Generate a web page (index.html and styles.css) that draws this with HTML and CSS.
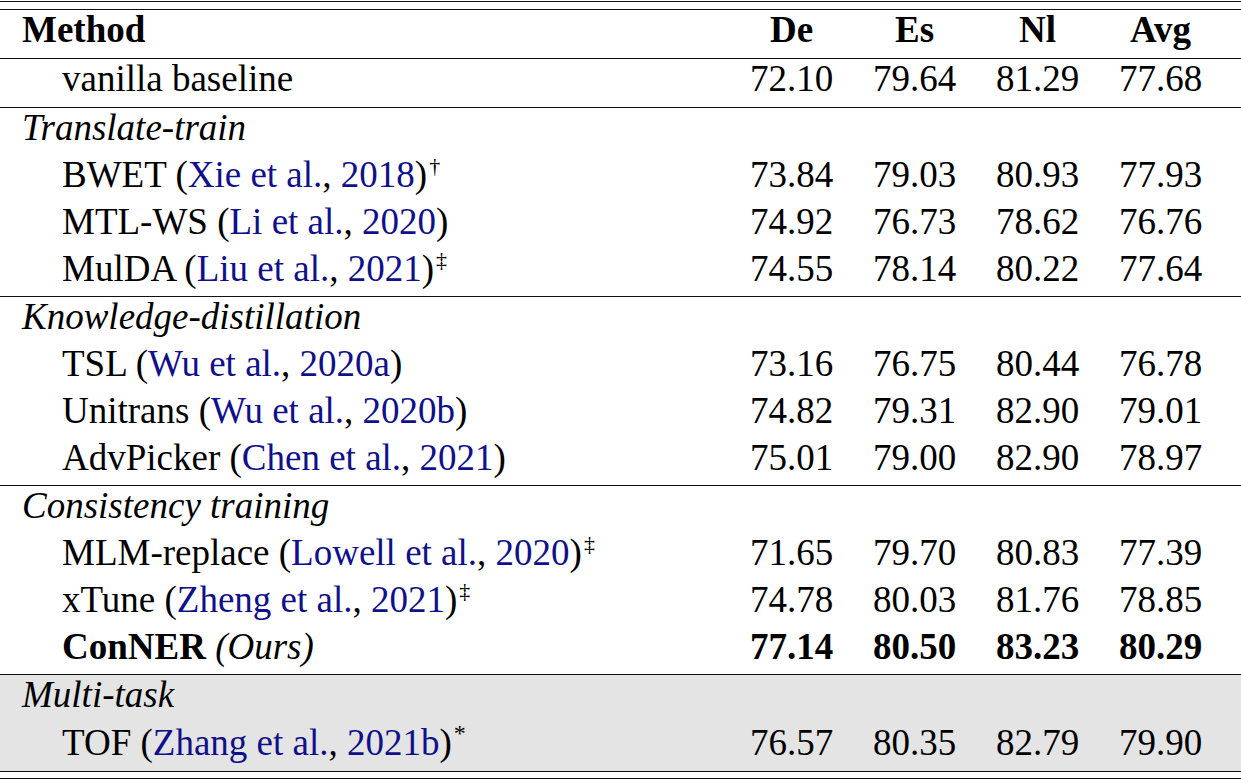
FILE: index.html
```html
<!DOCTYPE html>
<html lang="en">
<head>
<meta charset="utf-8">
<title>Results table</title>
<link rel="stylesheet" href="styles.css">
</head>
<body>
<div class="table">
  <div class="section head">
    <div class="row tall">
      <div class="cell method">Method</div>
      <div class="cell num">De</div>
      <div class="cell num">Es</div>
      <div class="cell num">Nl</div>
      <div class="cell num">Avg</div>
    </div>
  </div>
  <div class="section">
    <div class="row tall">
      <div class="cell method sub">vanilla baseline</div>
      <div class="cell num">72.10</div>
      <div class="cell num">79.64</div>
      <div class="cell num">81.29</div>
      <div class="cell num">77.68</div>
    </div>
  </div>
  <div class="section">
    <div class="row">
      <div class="cell method cat">Translate-train</div>
    </div>
    <div class="row">
      <div class="cell method sub">BWET (<a class="cite">Xie et al.</a>, <a class="cite">2018</a>)<sup class="mark">†</sup></div>
      <div class="cell num">73.84</div>
      <div class="cell num">79.03</div>
      <div class="cell num">80.93</div>
      <div class="cell num">77.93</div>
    </div>
    <div class="row">
      <div class="cell method sub">MTL-WS (<a class="cite">Li et al.</a>, <a class="cite">2020</a>)</div>
      <div class="cell num">74.92</div>
      <div class="cell num">76.73</div>
      <div class="cell num">78.62</div>
      <div class="cell num">76.76</div>
    </div>
    <div class="row">
      <div class="cell method sub">MulDA (<a class="cite">Liu et al.</a>, <a class="cite">2021</a>)<sup class="mark">‡</sup></div>
      <div class="cell num">74.55</div>
      <div class="cell num">78.14</div>
      <div class="cell num">80.22</div>
      <div class="cell num">77.64</div>
    </div>
  </div>
  <div class="section">
    <div class="row">
      <div class="cell method cat">Knowledge-distillation</div>
    </div>
    <div class="row">
      <div class="cell method sub">TSL (<a class="cite">Wu et al.</a>, <a class="cite">2020a</a>)</div>
      <div class="cell num">73.16</div>
      <div class="cell num">76.75</div>
      <div class="cell num">80.44</div>
      <div class="cell num">76.78</div>
    </div>
    <div class="row">
      <div class="cell method sub">Unitrans (<a class="cite">Wu et al.</a>, <a class="cite">2020b</a>)</div>
      <div class="cell num">74.82</div>
      <div class="cell num">79.31</div>
      <div class="cell num">82.90</div>
      <div class="cell num">79.01</div>
    </div>
    <div class="row">
      <div class="cell method sub">AdvPicker (<a class="cite">Chen et al.</a>, <a class="cite">2021</a>)</div>
      <div class="cell num">75.01</div>
      <div class="cell num">79.00</div>
      <div class="cell num">82.90</div>
      <div class="cell num">78.97</div>
    </div>
  </div>
  <div class="section">
    <div class="row">
      <div class="cell method cat">Consistency training</div>
    </div>
    <div class="row">
      <div class="cell method sub">MLM-replace (<a class="cite">Lowell et al.</a>, <a class="cite">2020</a>)<sup class="mark">‡</sup></div>
      <div class="cell num">71.65</div>
      <div class="cell num">79.70</div>
      <div class="cell num">80.83</div>
      <div class="cell num">77.39</div>
    </div>
    <div class="row">
      <div class="cell method sub">xTune (<a class="cite">Zheng et al.</a>, <a class="cite">2021</a>)<sup class="mark">‡</sup></div>
      <div class="cell num">74.78</div>
      <div class="cell num">80.03</div>
      <div class="cell num">81.76</div>
      <div class="cell num">78.85</div>
    </div>
    <div class="row best">
      <div class="cell method sub"><b>ConNER</b> <i>(Ours)</i></div>
      <div class="cell num">77.14</div>
      <div class="cell num">80.50</div>
      <div class="cell num">83.23</div>
      <div class="cell num">80.29</div>
    </div>
  </div>
  <div class="section shaded">
    <div class="row tall">
      <div class="cell method cat">Multi-task</div>
    </div>
    <div class="row tall">
      <div class="cell method sub">TOF (<a class="cite">Zhang et al.</a>, <a class="cite">2021b</a>)<sup class="mark star">*</sup></div>
      <div class="cell num">76.57</div>
      <div class="cell num">80.35</div>
      <div class="cell num">82.79</div>
      <div class="cell num">79.90</div>
    </div>
  </div>
</div>
</body>
</html>
```

FILE: styles.css
```css
html, body {
  margin: 0;
  padding: 0;
  background: #ffffff;
}

body {
  font-family: "Liberation Serif", "DejaVu Serif", serif;
  font-size: 37px;
  color: #000000;
  width: 1241px;
}

.table {
  margin-top: 1px;
  border-top: 1px solid #111111;
  border-bottom: 1px solid #111111;
  padding: 7px 0 6px;
}

.section {
  border-top: 1px solid #111111;
}

.section:last-child {
  border-bottom: 1px solid #111111;
}

.shaded {
  background: #e4e4e4;
}

.row {
  display: grid;
  grid-template-columns: 1fr repeat(4, 123px);
  padding-right: 19px;
  height: 47px;
}

.row.tall {
  height: 48px;
}

.cell {
  line-height: 39px;
  padding-bottom: 8px;
  white-space: nowrap;
}

.row.tall .cell {
  line-height: 40px;
}

.method {
  padding-left: 22px;
}

.method.sub {
  padding-left: 62px;
}

.cat {
  font-style: italic;
  grid-column: 1 / -1;
}

.num {
  text-align: center;
}

.head .cell {
  font-weight: bold;
}

.best .num {
  font-weight: bold;
}

.cite {
  color: #10108a;
  text-decoration: none;
}

.mark {
  font-size: 22px;
  vertical-align: 14px;
  line-height: 0;
  margin-left: 2px;
}

.mark.star {
  font-size: 24px;
}
```
